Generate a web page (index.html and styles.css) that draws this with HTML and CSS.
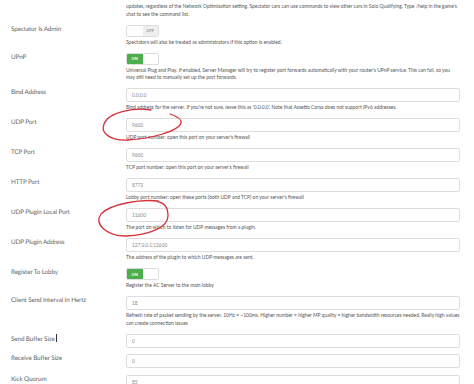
FILE: index.html
```html
<!DOCTYPE html>
<html lang="en">
<head>
<meta charset="UTF-8">
<title>Server Options</title>
<link rel="stylesheet" href="styles.css">
</head>
<body>

<div class="form">

    <div class="group">
        <div class="label"></div>
        <div class="control">
            <p class="help">updates, regardless of the Network Optimisation setting. Spectator cars can use commands to view other cars in Solo Qualifying. Type /help in the game's chat to see the command list.</p>
        </div>
    </div>

    <div class="group switch-group">
        <div class="label">Spectator Is Admin</div>
        <div class="control">
            <div class="switch off"><span class="blank"></span><span class="state">OFF</span></div>
            <p class="help">Spectators will also be treated as administrators if this option is enabled.</p>
        </div>
    </div>

    <div class="group switch-group">
        <div class="label">UPnP</div>
        <div class="control">
            <div class="switch on"><span class="state">ON</span><span class="blank"></span></div>
            <p class="help">Universal Plug and Play. If enabled, Server Manager will try to register port forwards automatically with your router's UPnP service. This can fail, so you may still need to manually set up the port forwards.</p>
        </div>
    </div>

    <div class="group">
        <div class="label">Bind Address</div>
        <div class="control">
            <input class="input" type="text" value="0.0.0.0">
            <p class="help">Bind address for the server. If you're not sure, leave this as '0.0.0.0'. Note that Assetto Corsa does not support IPv6 addresses.</p>
        </div>
    </div>

    <div class="group">
        <div class="label">UDP Port</div>
        <div class="control">
            <input class="input" type="text" value="9600">
            <p class="help">UDP port number: open this port on your server's firewall</p>
        </div>
    </div>

    <div class="group">
        <div class="label">TCP Port</div>
        <div class="control">
            <input class="input" type="text" value="9600">
            <p class="help">TCP port number: open this port on your server's firewall</p>
        </div>
    </div>

    <div class="group">
        <div class="label">HTTP Port</div>
        <div class="control">
            <input class="input" type="text" value="8773">
            <p class="help">Lobby port number: open these ports (both UDP and TCP) on your server's firewall</p>
        </div>
    </div>

    <div class="group">
        <div class="label">UDP Plugin Local Port</div>
        <div class="control">
            <input class="input" type="text" value="11600">
            <p class="help">The port on which to listen for UDP messages from a plugin.</p>
        </div>
    </div>

    <div class="group">
        <div class="label">UDP Plugin Address</div>
        <div class="control">
            <input class="input" type="text" value="127.0.0.1:12600">
            <p class="help">The address of the plugin to which UDP messages are sent.</p>
        </div>
    </div>

    <div class="group switch-group">
        <div class="label">Register To Lobby</div>
        <div class="control">
            <div class="switch on"><span class="state">ON</span><span class="blank"></span></div>
            <p class="help">Register the AC Server to the main lobby</p>
        </div>
    </div>

    <div class="group">
        <div class="label">Client Send Interval In Hertz</div>
        <div class="control">
            <input class="input" type="text" value="18">
            <p class="help">Refresh rate of packet sending by the server. 10Hz = ~100ms. Higher number = higher MP quality = higher bandwidth resources needed. Really high values can create connection issues</p>
        </div>
    </div>

    <div class="group">
        <div class="label">Send Buffer Size<span class="caret"></span></div>
        <div class="control">
            <input class="input" type="text" value="0">
        </div>
    </div>

    <div class="group">
        <div class="label">Receive Buffer Size</div>
        <div class="control">
            <input class="input" type="text" value="0">
        </div>
    </div>

    <div class="group last">
        <div class="label">Kick Quorum</div>
        <div class="control">
            <input class="input" type="text" value="85">
        </div>
    </div>

    <svg class="marks" width="474" height="384" viewBox="0 0 474 384">
        <path d="M151 110 C 135 107, 108 112, 104 124 C 100 134, 112 141, 128 140 C 148 139, 178 132, 181 123 C 182 119, 176 116, 170 114"/>
        <path d="M158 201 C 140 199, 110 204, 101 214 C 94 224, 106 236, 126 236 C 148 235, 168 228, 168 216 C 168 206, 164 203, 156 201"/>
    </svg>

</div>

</body>
</html>
```

FILE: styles.css
```css
body {
    margin: 0;
    font-family: Lato, "Open Sans", sans-serif;
    background-color: #fff;
    color: #555;
}
.form {
    position: relative;
    padding: 1px 14px 0 11px;
    height: 384px;
    overflow: hidden;
}
.group {
    display: grid;
    grid-template-columns: 115px 1fr;
    margin-bottom: 6.5px;
}
.group.last {
    margin-top: 3px;
}
.label {
    font-size: 6.3px;
    line-height: 10px;
    letter-spacing: -0.1px;
    text-rendering: geometricPrecision;
    color: #666;
}
.caret {
    display: inline-block;
    width: 1px;
    height: 8px;
    margin-left: 1px;
    vertical-align: -1px;
    background-color: #333;
}
.input {
    display: block;
    box-sizing: border-box;
    width: 100%;
    height: 14px;
    margin: 0;
    padding: 0 5px;
    border: 1px solid #ddd;
    border-radius: 2px;
    font-family: Lato, sans-serif;
    font-size: 4.8px;
    color: #888;
    background-color: #fff;
}
.help {
    margin: 2px 0 0 0;
    font-size: 4.95px;
    line-height: 7.5px;
    color: #555;
}
.switch {
    display: flex;
    width: 33px;
    height: 12px;
    box-sizing: border-box;
    border: 1px solid #ddd;
    border-radius: 2px;
    overflow: hidden;
}
.switch span {
    flex: 1;
    display: flex;
    align-items: center;
    justify-content: center;
    font-size: 4px;
    font-weight: bold;
}
.switch .blank {
    background-color: #fff;
}
.off .state {
    background-color: #eee;
    color: #999;
}
.on .state {
    background-color: #4cae4c;
    color: #fff;
}
.marks {
    position: absolute;
    left: 0;
    top: 0;
    pointer-events: none;
}
.marks path {
    fill: none;
    stroke: #d6303a;
    stroke-width: 1.3;
    stroke-linecap: round;
}
```
